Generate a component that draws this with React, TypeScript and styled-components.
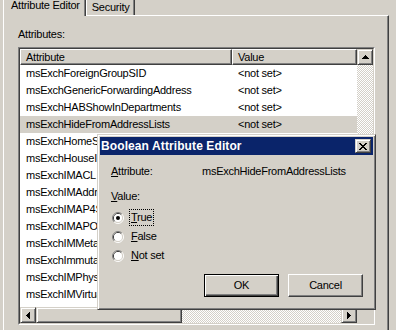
import styled, { createGlobalStyle } from "styled-components";

const FACE = "#d4d0c8";
const SHADOW = "#808080";
const DARK = "#404040";
const HILITE = "#ffffff";
const TITLE = "#0a246a";

const GlobalStyle = createGlobalStyle`
  body {
    margin: 0;
    background: ${FACE};
    font-family: "Liberation Sans", Arial, sans-serif;
    font-size: 11px;
    letter-spacing: -0.25px;
    color: #000;
  }
`;

const raisedBevel = `
  box-sizing: border-box;
  background: ${FACE};
  border: 1px solid;
  border-color: ${FACE} ${DARK} ${DARK} ${FACE};
  box-shadow: inset 1px 1px ${HILITE}, inset -1px -1px ${SHADOW};
`;

const dither = `
  background: repeating-conic-gradient(${FACE} 0 25%, ${HILITE} 0 50%) 0 0 / 2px 2px;
`;

const Page = styled.div`
  position: relative;
  width: 396px;
  height: 330px;
  overflow: hidden;
`;

const TabStrip = styled.div`
  display: flex;
  align-items: flex-end;
  height: 15px;
  margin-left: 3px;
`;

const Tab = styled.div<{ $active?: boolean }>`
  position: relative;
  z-index: 1;
  box-sizing: border-box;
  height: ${(p) => (p.$active ? 21 : 18)}px;
  margin-bottom: ${(p) => (p.$active ? -1 : 0)}px;
  padding: ${(p) => (p.$active ? "4px 5px 0 7px" : "4px 4px 0 5px")};
  line-height: 13px;
  background: ${FACE};
  border-left: 1px solid ${HILITE};
  border-right: 1px solid ${DARK};
  box-shadow: inset -1px 0 ${SHADOW};
  white-space: nowrap;
`;

const Panel = styled.div`
  box-sizing: border-box;
  width: 386px;
  height: 340px;
  margin-left: 3px;
  padding: 12px 0 0 14px;
  border-top: 1px solid ${HILITE};
  border-left: 1px solid ${HILITE};
  border-right: 1px solid ${DARK};
  box-shadow: inset -1px 0 ${SHADOW};
`;

const Label = styled.div`
  line-height: 13px;
  margin-bottom: 6px;
`;

const ListBox = styled.div`
  box-sizing: border-box;
  width: 357px;
  height: 278px;
  border: 1px solid;
  border-color: ${SHADOW} ${HILITE} ${HILITE} ${SHADOW};
`;

const ListGrid = styled.div`
  box-sizing: border-box;
  height: 100%;
  display: grid;
  grid-template-columns: 1fr 16px;
  grid-template-rows: 1fr 16px;
  border: 1px solid;
  border-color: ${DARK} ${FACE} ${FACE} ${DARK};
  background: #fff;
`;

const ListContent = styled.div`
  overflow: hidden;
  display: flex;
  flex-direction: column;
`;

const Header = styled.div`
  display: grid;
  grid-template-columns: 212px 1fr;
  height: 16px;
  flex-shrink: 0;
`;

const HeaderCell = styled.div`
  ${raisedBevel}
  border-color: ${HILITE} ${DARK} ${DARK} ${HILITE};
  box-shadow: inset -1px -1px ${SHADOW};
  padding-left: 5px;
  line-height: 14px;
`;

const Row = styled.div<{ $selected?: boolean }>`
  display: grid;
  grid-template-columns: 212px 1fr;
  height: 17px;
  flex-shrink: 0;
  line-height: 17px;
  background: ${(p) => (p.$selected ? FACE : "#fff")};
`;

const Cell = styled.div`
  padding-left: 6px;
  white-space: nowrap;
  overflow: hidden;
`;

const VScroll = styled.div`
  display: flex;
  flex-direction: column;
  ${dither}
`;

const HScroll = styled.div`
  display: flex;
  ${dither}
`;

const ScrollButton = styled.div`
  ${raisedBevel}
  width: 16px;
  height: 16px;
  flex-shrink: 0;
  display: flex;
  align-items: center;
  justify-content: center;
`;

const Track = styled.div`
  flex: 1;
`;

const Thumb = styled.div<{ $vertical?: boolean }>`
  ${raisedBevel}
  flex-shrink: 0;
  width: ${(p) => (p.$vertical ? "16px" : "146px")};
  height: ${(p) => (p.$vertical ? "40px" : "16px")};
  margin-top: ${(p) => (p.$vertical ? "90px" : "0")};
`;

const Corner = styled.div`
  background: ${FACE};
`;

const Dialog = styled.div`
  position: absolute;
  left: 97px;
  top: 134px;
  width: 279px;
  height: 176px;
  box-sizing: border-box;
  display: flex;
  flex-direction: column;
  padding: 2px;
  background: ${FACE};
  border: 1px solid;
  border-color: ${FACE} ${DARK} ${DARK} ${FACE};
  box-shadow: inset 1px 1px ${HILITE}, inset -1px -1px ${SHADOW};
`;

const TitleBar = styled.div`
  display: flex;
  align-items: center;
  justify-content: space-between;
  height: 18px;
  padding: 0 2px 0 1px;
  background: ${TITLE};
  color: #fff;
  font-weight: bold;
  font-size: 12px;
  letter-spacing: 0.1px;
`;

const CloseButton = styled.div`
  ${raisedBevel}
  width: 16px;
  height: 14px;
  display: flex;
  align-items: center;
  justify-content: center;
`;

const DialogBody = styled.div`
  flex: 1;
  display: flex;
  flex-direction: column;
  padding: 10px 10px 10px 11px;
  line-height: 13px;
`;

const FieldRow = styled.div`
  display: grid;
  grid-template-columns: 91px 1fr;
`;

const ValueLabel = styled.div`
  margin-top: 12px;
`;

const RadioGroup = styled.div`
  display: flex;
  flex-direction: column;
  margin-top: 5px;
  padding-left: 1px;
`;

const RadioRow = styled.div`
  display: flex;
  align-items: center;
  height: 19px;
  gap: 5px;
`;

const RadioLabel = styled.span<{ $focused?: boolean }>`
  padding: 1px 1px;
  border: 1px dotted ${(p) => (p.$focused ? "#000" : "transparent")};
`;

const Mnemonic = styled.span`
  text-decoration: underline;
`;

const ButtonRow = styled.div`
  margin-top: auto;
  display: flex;
  justify-content: flex-end;
  gap: 9px;
`;

const PushButton = styled.div<{ $default?: boolean }>`
  box-sizing: border-box;
  width: 75px;
  height: 23px;
  display: flex;
  align-items: center;
  justify-content: center;
  background: ${FACE};
  border: 1px solid;
  border-color: ${(p) => (p.$default ? "#000" : `${HILITE} ${DARK} ${DARK} ${HILITE}`)};
  box-shadow: ${(p) =>
    p.$default
      ? `inset 1px 1px ${HILITE}, inset -1px -1px ${DARK}, inset -2px -2px ${SHADOW}`
      : `inset -1px -1px ${SHADOW}`};
`;

const Arrow = ({ dir }: { dir: "up" | "down" | "left" | "right" }) => {
  const paths = {
    up: "M3 0h1v1h1v1h1v1h1v1H0V3h1V2h1V1h1z",
    down: "M0 0h7v1H6v1H5v1H4v1H3V3H2V2H1V1H0z",
    left: "M4 0v7H3V6H2V5H1V4H0V3h1V2h1V1h1V0z",
    right: "M0 0h1v1h1v1h1v1h1v1H3v1H2v1H1v1H0z",
  };
  const vertical = dir === "up" || dir === "down";
  return (
    <svg width={vertical ? 7 : 4} height={vertical ? 4 : 7} shapeRendering="crispEdges">
      <path d={paths[dir]} fill="#000" />
    </svg>
  );
};

const CLOSE_PATTERN = [
  "xx....xx",
  ".xx..xx.",
  "..xxxx..",
  "...xx...",
  "..xxxx..",
  ".xx..xx.",
  "xx....xx",
];

const CloseGlyph = () => (
  <svg width={8} height={7} shapeRendering="crispEdges">
    {CLOSE_PATTERN.flatMap((line, y) =>
      line.split("").map((c, x) => (c === "x" ? <rect key={`${x}-${y}`} x={x} y={y} width={1} height={1} fill="#000" /> : null))
    )}
  </svg>
);

const Radio = ({ checked }: { checked?: boolean }) => (
  <svg width={12} height={12}>
    <path d="M2.11 9.89A5.5 5.5 0 0 1 9.89 2.11" fill="none" stroke={SHADOW} />
    <path d="M9.89 2.11A5.5 5.5 0 0 1 2.11 9.89" fill="none" stroke={HILITE} />
    <path d="M2.82 9.18A4.5 4.5 0 0 1 9.18 2.82" fill="none" stroke={DARK} />
    <path d="M9.18 2.82A4.5 4.5 0 0 1 2.82 9.18" fill="none" stroke={FACE} />
    <circle cx={6} cy={6} r={4} fill="#fff" />
    {checked && <circle cx={6} cy={6} r={2} fill="#000" />}
  </svg>
);

const ATTRIBUTES = [
  "msExchForeignGroupSID",
  "msExchGenericForwardingAddress",
  "msExchHABShowInDepartments",
  "msExchHideFromAddressLists",
  "msExchHomeSyncService",
  "msExchHouseIdentifier",
  "msExchIMACL",
  "msExchIMAddress",
  "msExchIMAP4Settings",
  "msExchIMAPOWAURLPrefixOverride",
  "msExchIMMetaPhysicalURL",
  "msExchImmutableId",
  "msExchIMPhysicalURL",
  "msExchIMVirtualServer",
  "msExchIntendedMailboxPlan",
  "msExchInterruptUserOnAuditFailure",
];

const App = () => {
  return (
    <Page>
      <GlobalStyle />
      <TabStrip>
        <Tab $active>Attribute Editor</Tab>
        <Tab>Security</Tab>
      </TabStrip>
      <Panel>
        <Label>Attributes:</Label>
        <ListBox>
          <ListGrid>
            <ListContent>
              <Header>
                <HeaderCell>Attribute</HeaderCell>
                <HeaderCell>Value</HeaderCell>
              </Header>
              {ATTRIBUTES.map((name) => (
                <Row key={name} $selected={name === "msExchHideFromAddressLists"}>
                  <Cell>{name}</Cell>
                  <Cell>&lt;not set&gt;</Cell>
                </Row>
              ))}
            </ListContent>
            <VScroll>
              <ScrollButton>
                <Arrow dir="up" />
              </ScrollButton>
              <Track>
                <Thumb $vertical />
              </Track>
              <ScrollButton>
                <Arrow dir="down" />
              </ScrollButton>
            </VScroll>
            <HScroll>
              <ScrollButton>
                <Arrow dir="left" />
              </ScrollButton>
              <Thumb />
              <Track />
              <ScrollButton>
                <Arrow dir="right" />
              </ScrollButton>
            </HScroll>
            <Corner />
          </ListGrid>
        </ListBox>
      </Panel>

      <Dialog>
        <TitleBar>
          <span>Boolean Attribute Editor</span>
          <CloseButton>
            <CloseGlyph />
          </CloseButton>
        </TitleBar>
        <DialogBody>
          <FieldRow>
            <span>
              <Mnemonic>A</Mnemonic>ttribute:
            </span>
            <span>msExchHideFromAddressLists</span>
          </FieldRow>
          <ValueLabel>
            <Mnemonic>V</Mnemonic>alue:
          </ValueLabel>
          <RadioGroup>
            <RadioRow>
              <Radio checked />
              <RadioLabel $focused>
                <Mnemonic>T</Mnemonic>rue
              </RadioLabel>
            </RadioRow>
            <RadioRow>
              <Radio />
              <RadioLabel>
                <Mnemonic>F</Mnemonic>alse
              </RadioLabel>
            </RadioRow>
            <RadioRow>
              <Radio />
              <RadioLabel>
                <Mnemonic>N</Mnemonic>ot set
              </RadioLabel>
            </RadioRow>
          </RadioGroup>
          <ButtonRow>
            <PushButton $default>OK</PushButton>
            <PushButton>Cancel</PushButton>
          </ButtonRow>
        </DialogBody>
      </Dialog>
    </Page>
  );
};

export default App;
